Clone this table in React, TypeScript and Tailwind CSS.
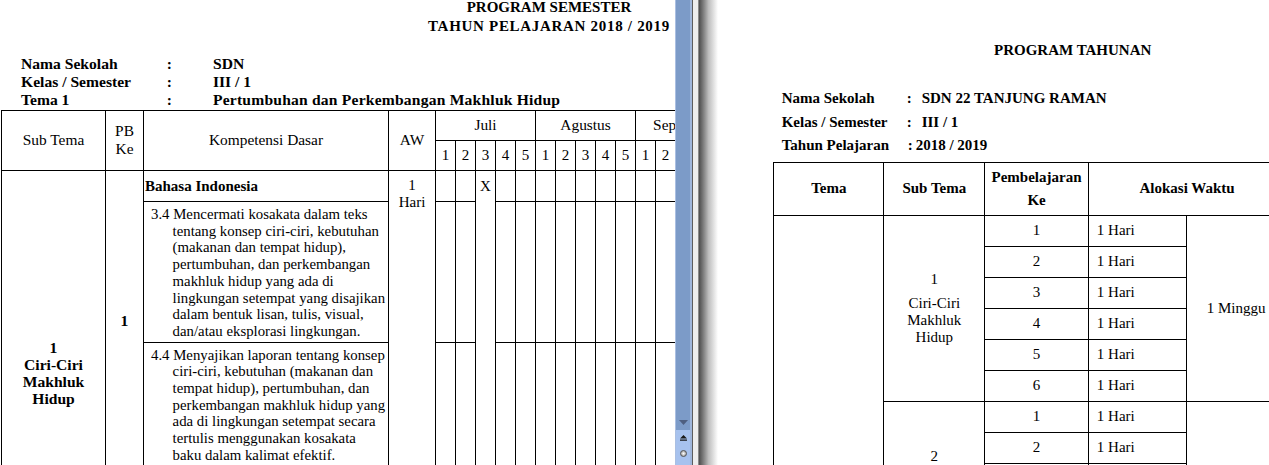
import React from "react";

const cell = "border border-black p-0";
const weeks = ["1", "2", "3", "4", "5", "1", "2", "3", "4", "5", "1", "2"];

function LeftDoc() {
  return (
    <div className="w-[675px] shrink-0 overflow-hidden bg-white">
      <div className="ml-[419px] mt-[-2px] w-[260px] whitespace-nowrap text-center text-[15px] font-bold leading-[19px]">
        <div>PROGRAM SEMESTER</div>
        <div className="tracking-[0.7px]">TAHUN PELAJARAN 2018 / 2019</div>
      </div>

      {/* identitas */}
      <div className="mt-[18.7px] grid grid-cols-[145.7px_46.3px_1fr] whitespace-nowrap pl-[21px] text-[15.6px] font-bold leading-[18px]">
        <div>Nama Sekolah</div>
        <div>:</div>
        <div>SDN</div>
        <div>Kelas / Semester</div>
        <div>:</div>
        <div>III / 1</div>
        <div>Tema 1</div>
        <div>:</div>
        <div className="tracking-[0.2px]">Pertumbuhan dan Perkembangan Makhluk Hidup</div>
      </div>

      <table className="ml-[1px] mt-[1.3px] w-[674px] table-fixed border-collapse text-[15.4px] leading-[18px]">
        <colgroup>
          <col className="w-[104px]" />
          <col className="w-[38px]" />
          <col className="w-[245px]" />
          <col className="w-[47px]" />
          {weeks.map((_, i) => (
            <col key={i} className="w-[20px]" />
          ))}
        </colgroup>
        <thead>
          <tr>
            <th rowSpan={2} className={`${cell} font-normal`}>Sub Tema</th>
            <th rowSpan={2} className={`${cell} font-normal`}>
              PB
              <br />
              Ke
            </th>
            <th rowSpan={2} className={`${cell} font-normal`}>Kompetensi Dasar</th>
            <th rowSpan={2} className={`${cell} font-normal`}>AW</th>
            <th colSpan={5} className={`${cell} h-[30px] font-normal`}>Juli</th>
            <th colSpan={5} className={`${cell} font-normal`}>Agustus</th>
            <th colSpan={2} className={`${cell} overflow-hidden whitespace-nowrap border-r-0 pl-[17px] text-left font-normal`}>
              Sep
            </th>
          </tr>
          <tr>
            {weeks.map((w, i) => (
              <th key={i} className={`${cell} h-[30px] text-[15px] font-normal`}>{w}</th>
            ))}
          </tr>
        </thead>
        <tbody>
          <tr>
            <td rowSpan={3} className={`${cell} pt-[168px] text-center align-top text-[15.6px] font-bold leading-[17px]`}>
              <div>1</div>
              <div>Ciri-Ciri</div>
              <div>Makhluk</div>
              <div>Hidup</div>
            </td>
            <td rowSpan={3} className={`${cell} pt-[141px] text-center align-top text-[15.6px] font-bold`}>1</td>
            <td className={`${cell} h-[31px] pl-[1px] text-[15px] font-bold`}>Bahasa Indonesia</td>
            <td rowSpan={3} className={`${cell} pt-[6.5px] text-center align-top text-[15px] leading-[16.7px]`}>
              1
              <br />
              Hari
            </td>
            <td className={cell} />
            <td className={cell} />
            <td rowSpan={3} className={`${cell} pt-[6px] text-center align-top text-[15px]`}>X</td>
            {weeks.slice(3).map((_, i) => (
              <td key={i} className={cell} />
            ))}
          </tr>
          <tr>
            <td className={`${cell} h-[141px] whitespace-nowrap pl-[7px] pt-[4px] align-top text-[14.8px] leading-[16.7px]`}>
              <div>3.4 Mencermati kosakata dalam teks</div>
              <div className="pl-[21.6px]">
                <div>tentang konsep ciri-ciri, kebutuhan</div>
                <div>(makanan dan tempat hidup),</div>
                <div>pertumbuhan, dan perkembangan</div>
                <div>makhluk hidup yang ada di</div>
                <div>lingkungan setempat yang disajikan</div>
                <div>dalam bentuk lisan, tulis, visual,</div>
                <div>dan/atau eksplorasi lingkungan.</div>
              </div>
            </td>
            <td className={cell} />
            <td className={cell} />
            {weeks.slice(3).map((_, i) => (
              <td key={i} className={cell} />
            ))}
          </tr>
          <tr>
            <td className={`${cell} h-[234px] whitespace-nowrap pl-[7px] pt-[3.7px] align-top text-[14.8px] leading-[16.7px]`}>
              <div>4.4 Menyajikan laporan tentang konsep</div>
              <div className="pl-[21.6px]">
                <div>ciri-ciri, kebutuhan (makanan dan</div>
                <div>tempat hidup), pertumbuhan, dan</div>
                <div>perkembangan makhluk hidup yang</div>
                <div>ada di lingkungan setempat secara</div>
                <div>tertulis menggunakan kosakata</div>
                <div>baku dalam kalimat efektif.</div>
              </div>
            </td>
            <td className={cell} />
            <td className={cell} />
            {weeks.slice(3).map((_, i) => (
              <td key={i} className={cell} />
            ))}
          </tr>
        </tbody>
      </table>
    </div>
  );
}

function ScrollBar() {
  return (
    <div className="flex w-[17px] shrink-0 flex-col border-l border-r-2 border-l-[#aabfe2] border-r-[#9fb6db] bg-[#7c9bc8]">
      <div className="flex flex-1 items-end justify-center pb-[5px]">
        <svg width="9" height="5" viewBox="0 0 9 5">
          <path d="M0 0 H9 L4.5 5 Z" fill="#4e5f80" />
        </svg>
      </div>
      <div className="flex h-[35px] flex-col items-center gap-[7px] bg-[#a7c2ee] pt-[5px]">
        <svg width="7" height="8" viewBox="0 0 7 8">
          <path d="M3.5 0 L7 3.5 H0 Z M0 4.5 H7 V5.8 H0 Z" fill="#1a1a1a" />
        </svg>
        <div className="h-[7px] w-[7px] rounded-full border border-[#555] bg-radial from-white to-[#8a8a8a]" />
      </div>
    </div>
  );
}

function RightDoc() {
  const hari = "border border-black p-0 pl-[8px] text-left";
  const nomor = "border border-black p-0 text-center";
  return (
    <div className="flex-1 overflow-hidden bg-white">
      <div className="ml-[276px] mt-[41.4px] whitespace-nowrap text-[15px] font-bold leading-[19px]">
        PROGRAM TAHUNAN
      </div>

      <div className="mt-[26.9px] whitespace-nowrap pl-[63.7px] text-[15px] font-bold leading-[23.3px]">
        <div className="flex">
          <span className="w-[125px]">Nama Sekolah</span>
          <span>:</span>
          <span className="ml-[10px]">SDN 22 TANJUNG RAMAN</span>
        </div>
        <div className="flex">
          <span className="w-[125px]">Kelas / Semester</span>
          <span>:</span>
          <span className="ml-[10px]">III / 1</span>
        </div>
        <div className="flex">
          <span className="w-[126px]">Tahun Pelajaran</span>
          <span>:</span>
          <span className="ml-[3px]">2018 / 2019</span>
        </div>
      </div>

      <table className="ml-[55.3px] mt-[4.7px] w-[512px] table-fixed border-collapse text-[15px] leading-[17px]">
        <colgroup>
          <col className="w-[110px]" />
          <col className="w-[101px]" />
          <col className="w-[103.5px]" />
          <col className="w-[98px]" />
          <col className="w-[99.5px]" />
        </colgroup>
        <thead>
          <tr>
            <th className="h-[53px] border border-black p-0">Tema</th>
            <th className="border border-black p-0">Sub Tema</th>
            <th className="border border-black p-0 leading-[23.3px]">
              Pembelajaran
              <br />
              Ke
            </th>
            <th colSpan={2} className="border border-black p-0">Alokasi Waktu</th>
          </tr>
        </thead>
        <tbody>
          {[1, 2, 3, 4, 5, 6].map((n) => (
            <tr key={`a${n}`}>
              {n === 1 && <td rowSpan={12} className="border border-black p-0" />}
              {n === 1 && (
                <td rowSpan={6} className="border border-black p-0 text-center">
                  <div className="mb-[6.7px]">1</div>
                  <div>Ciri-Ciri</div>
                  <div>Makhluk</div>
                  <div>Hidup</div>
                </td>
              )}
              <td className={`${nomor} h-[31px]`}>{n}</td>
              <td className={hari}>1 Hari</td>
              {n === 1 && (
                <td rowSpan={6} className="border border-black p-0 text-center">
                  1 Minggu
                </td>
              )}
            </tr>
          ))}
          {[1, 2, 3, 4, 5, 6].map((n) => (
            <tr key={`b${n}`}>
              {n === 1 && (
                <td rowSpan={6} className="border border-black p-0 pt-[46px] text-center align-top">
                  <div className="mb-[6.7px]">2</div>
                  <div>Pertumbuhan</div>
                  <div>Hewan</div>
                </td>
              )}
              <td className={`${nomor} h-[31px]`}>{n}</td>
              <td className={hari}>1 Hari</td>
              {n === 1 && (
                <td rowSpan={6} className="border border-black p-0 text-center">
                  1 Minggu
                </td>
              )}
            </tr>
          ))}
        </tbody>
      </table>
    </div>
  );
}

export default function App() {
  return (
    <div className="flex h-[465px] w-[1269px] overflow-hidden bg-white font-['Liberation_Serif','Times_New_Roman',serif] text-black">
      <LeftDoc />
      <ScrollBar />
      {/* pemisah jendela */}
      <div className="w-px shrink-0 bg-[#5d5d5d]" />
      <div className="w-[5px] shrink-0 bg-[#ededed]" />
      <div className="w-px shrink-0 bg-[#8a8a8a]" />
      <div className="w-[19px] shrink-0 bg-linear-to-r from-[#4d4d4d] via-[#bdbdbd] to-white" />
      <RightDoc />
    </div>
  );
}
